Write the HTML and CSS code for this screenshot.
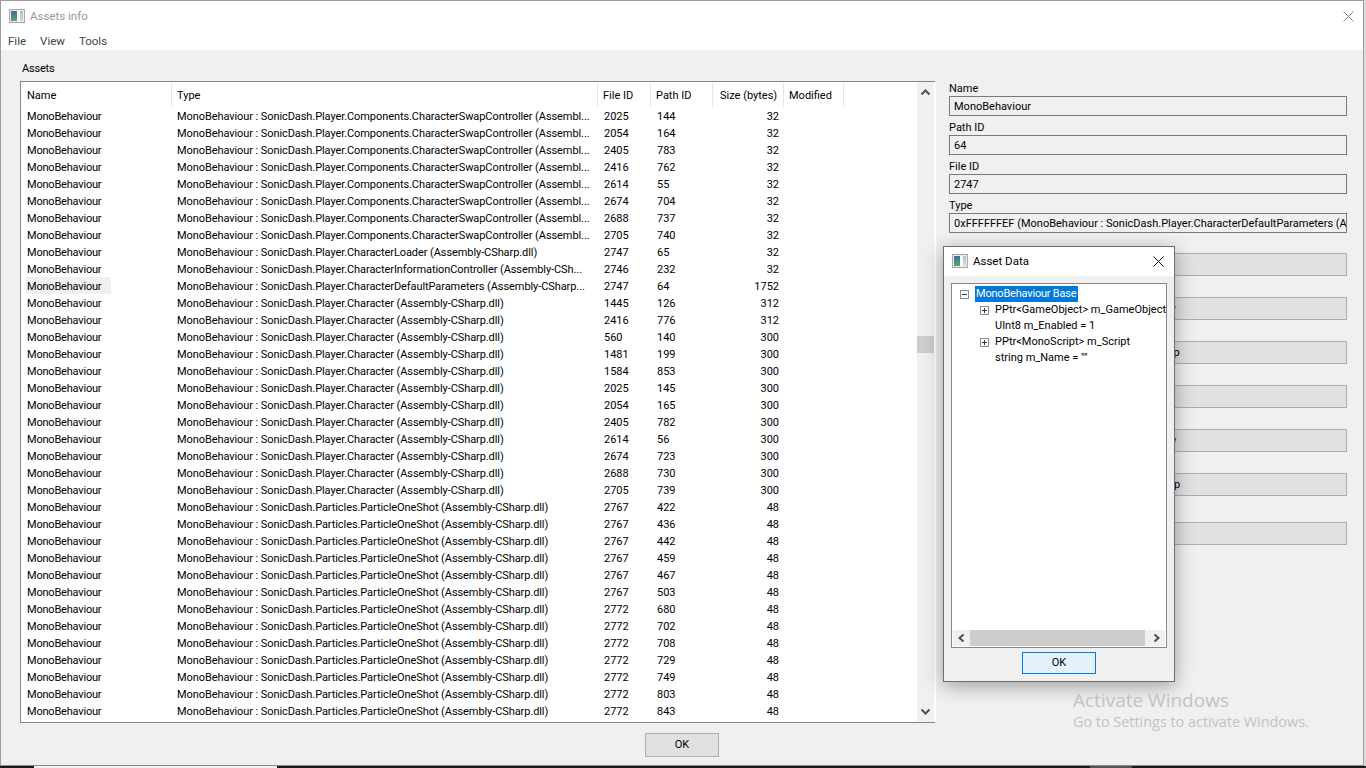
FILE: index.html
```html
<!DOCTYPE html>
<html lang="en">
<head>
<meta charset="utf-8">
<title>Assets info</title>
<link rel="stylesheet" href="styles.css">
</head>
<body>
<svg class="defs" width="0" height="0" aria-hidden="true"><defs>
  <linearGradient id="ic1" x1="0" y1="0" x2="0" y2="1"><stop offset="0" stop-color="#3f6f8f"/><stop offset="1" stop-color="#5f9f70"/></linearGradient>
  <linearGradient id="ic2" x1="0" y1="0" x2="0" y2="1"><stop offset="0" stop-color="#a9bfd2"/><stop offset="1" stop-color="#cfe3c8"/></linearGradient>
</defs></svg>
<div class="window">
  <header class="titlebar">
    <svg class="appicon" width="16" height="14" viewBox="0 0 16 14"><rect x="0.5" y="0.5" width="15" height="13" fill="#ececec" stroke="#a8a8a8"/><rect x="2" y="2" width="6" height="10" fill="url(#ic1)"/><rect x="8" y="2" width="3" height="10" fill="#fbfbfb"/><rect x="11" y="2" width="3" height="10" fill="url(#ic2)"/></svg>
    <span class="title">Assets info</span>
    <svg class="winclose" width="11" height="11" viewBox="0 0 11 11"><path d="M0.5 0.5L10.5 10.5M10.5 0.5L0.5 10.5" stroke="#8a8a8a" fill="none"/></svg>
  </header>
  <nav class="menubar"><span>File</span><span>View</span><span>Tools</span></nav>
  <main class="content">
    <div class="columns">
      <section class="assets">
        <div class="assets-label">Assets</div>
        <div class="listbox">
          <div class="tablewrap">
            <table class="grid">
              <colgroup><col class="c1"><col class="c2"><col class="c3"><col class="c4"><col class="c5"><col class="c6"><col></colgroup>
              <thead><tr><th>Name</th><th>Type</th><th>File ID</th><th>Path ID</th><th class="sz">Size (bytes)</th><th>Modified</th><th class="blank"></th></tr></thead>
              <tbody>
<tr><td>MonoBehaviour</td><td>MonoBehaviour : SonicDash.Player.Components.CharacterSwapController (Assembl...</td><td>2025</td><td>144</td><td class="n">32</td><td></td><td></td></tr>
<tr><td>MonoBehaviour</td><td>MonoBehaviour : SonicDash.Player.Components.CharacterSwapController (Assembl...</td><td>2054</td><td>164</td><td class="n">32</td><td></td><td></td></tr>
<tr><td>MonoBehaviour</td><td>MonoBehaviour : SonicDash.Player.Components.CharacterSwapController (Assembl...</td><td>2405</td><td>783</td><td class="n">32</td><td></td><td></td></tr>
<tr><td>MonoBehaviour</td><td>MonoBehaviour : SonicDash.Player.Components.CharacterSwapController (Assembl...</td><td>2416</td><td>762</td><td class="n">32</td><td></td><td></td></tr>
<tr><td>MonoBehaviour</td><td>MonoBehaviour : SonicDash.Player.Components.CharacterSwapController (Assembl...</td><td>2614</td><td>55</td><td class="n">32</td><td></td><td></td></tr>
<tr><td>MonoBehaviour</td><td>MonoBehaviour : SonicDash.Player.Components.CharacterSwapController (Assembl...</td><td>2674</td><td>704</td><td class="n">32</td><td></td><td></td></tr>
<tr><td>MonoBehaviour</td><td>MonoBehaviour : SonicDash.Player.Components.CharacterSwapController (Assembl...</td><td>2688</td><td>737</td><td class="n">32</td><td></td><td></td></tr>
<tr><td>MonoBehaviour</td><td>MonoBehaviour : SonicDash.Player.Components.CharacterSwapController (Assembl...</td><td>2705</td><td>740</td><td class="n">32</td><td></td><td></td></tr>
<tr><td>MonoBehaviour</td><td>MonoBehaviour : SonicDash.Player.CharacterLoader (Assembly-CSharp.dll)</td><td>2747</td><td>65</td><td class="n">32</td><td></td><td></td></tr>
<tr><td>MonoBehaviour</td><td>MonoBehaviour : SonicDash.Player.CharacterInformationController (Assembly-CSh...</td><td>2746</td><td>232</td><td class="n">32</td><td></td><td></td></tr>
<tr><td class="hover">MonoBehaviour</td><td>MonoBehaviour : SonicDash.Player.CharacterDefaultParameters (Assembly-CSharp...</td><td>2747</td><td>64</td><td class="n">1752</td><td></td><td></td></tr>
<tr><td>MonoBehaviour</td><td>MonoBehaviour : SonicDash.Player.Character (Assembly-CSharp.dll)</td><td>1445</td><td>126</td><td class="n">312</td><td></td><td></td></tr>
<tr><td>MonoBehaviour</td><td>MonoBehaviour : SonicDash.Player.Character (Assembly-CSharp.dll)</td><td>2416</td><td>776</td><td class="n">312</td><td></td><td></td></tr>
<tr><td>MonoBehaviour</td><td>MonoBehaviour : SonicDash.Player.Character (Assembly-CSharp.dll)</td><td>560</td><td>140</td><td class="n">300</td><td></td><td></td></tr>
<tr><td>MonoBehaviour</td><td>MonoBehaviour : SonicDash.Player.Character (Assembly-CSharp.dll)</td><td>1481</td><td>199</td><td class="n">300</td><td></td><td></td></tr>
<tr><td>MonoBehaviour</td><td>MonoBehaviour : SonicDash.Player.Character (Assembly-CSharp.dll)</td><td>1584</td><td>853</td><td class="n">300</td><td></td><td></td></tr>
<tr><td>MonoBehaviour</td><td>MonoBehaviour : SonicDash.Player.Character (Assembly-CSharp.dll)</td><td>2025</td><td>145</td><td class="n">300</td><td></td><td></td></tr>
<tr><td>MonoBehaviour</td><td>MonoBehaviour : SonicDash.Player.Character (Assembly-CSharp.dll)</td><td>2054</td><td>165</td><td class="n">300</td><td></td><td></td></tr>
<tr><td>MonoBehaviour</td><td>MonoBehaviour : SonicDash.Player.Character (Assembly-CSharp.dll)</td><td>2405</td><td>782</td><td class="n">300</td><td></td><td></td></tr>
<tr><td>MonoBehaviour</td><td>MonoBehaviour : SonicDash.Player.Character (Assembly-CSharp.dll)</td><td>2614</td><td>56</td><td class="n">300</td><td></td><td></td></tr>
<tr><td>MonoBehaviour</td><td>MonoBehaviour : SonicDash.Player.Character (Assembly-CSharp.dll)</td><td>2674</td><td>723</td><td class="n">300</td><td></td><td></td></tr>
<tr><td>MonoBehaviour</td><td>MonoBehaviour : SonicDash.Player.Character (Assembly-CSharp.dll)</td><td>2688</td><td>730</td><td class="n">300</td><td></td><td></td></tr>
<tr><td>MonoBehaviour</td><td>MonoBehaviour : SonicDash.Player.Character (Assembly-CSharp.dll)</td><td>2705</td><td>739</td><td class="n">300</td><td></td><td></td></tr>
<tr><td>MonoBehaviour</td><td>MonoBehaviour : SonicDash.Particles.ParticleOneShot (Assembly-CSharp.dll)</td><td>2767</td><td>422</td><td class="n">48</td><td></td><td></td></tr>
<tr><td>MonoBehaviour</td><td>MonoBehaviour : SonicDash.Particles.ParticleOneShot (Assembly-CSharp.dll)</td><td>2767</td><td>436</td><td class="n">48</td><td></td><td></td></tr>
<tr><td>MonoBehaviour</td><td>MonoBehaviour : SonicDash.Particles.ParticleOneShot (Assembly-CSharp.dll)</td><td>2767</td><td>442</td><td class="n">48</td><td></td><td></td></tr>
<tr><td>MonoBehaviour</td><td>MonoBehaviour : SonicDash.Particles.ParticleOneShot (Assembly-CSharp.dll)</td><td>2767</td><td>459</td><td class="n">48</td><td></td><td></td></tr>
<tr><td>MonoBehaviour</td><td>MonoBehaviour : SonicDash.Particles.ParticleOneShot (Assembly-CSharp.dll)</td><td>2767</td><td>467</td><td class="n">48</td><td></td><td></td></tr>
<tr><td>MonoBehaviour</td><td>MonoBehaviour : SonicDash.Particles.ParticleOneShot (Assembly-CSharp.dll)</td><td>2767</td><td>503</td><td class="n">48</td><td></td><td></td></tr>
<tr><td>MonoBehaviour</td><td>MonoBehaviour : SonicDash.Particles.ParticleOneShot (Assembly-CSharp.dll)</td><td>2772</td><td>680</td><td class="n">48</td><td></td><td></td></tr>
<tr><td>MonoBehaviour</td><td>MonoBehaviour : SonicDash.Particles.ParticleOneShot (Assembly-CSharp.dll)</td><td>2772</td><td>702</td><td class="n">48</td><td></td><td></td></tr>
<tr><td>MonoBehaviour</td><td>MonoBehaviour : SonicDash.Particles.ParticleOneShot (Assembly-CSharp.dll)</td><td>2772</td><td>708</td><td class="n">48</td><td></td><td></td></tr>
<tr><td>MonoBehaviour</td><td>MonoBehaviour : SonicDash.Particles.ParticleOneShot (Assembly-CSharp.dll)</td><td>2772</td><td>729</td><td class="n">48</td><td></td><td></td></tr>
<tr><td>MonoBehaviour</td><td>MonoBehaviour : SonicDash.Particles.ParticleOneShot (Assembly-CSharp.dll)</td><td>2772</td><td>749</td><td class="n">48</td><td></td><td></td></tr>
<tr><td>MonoBehaviour</td><td>MonoBehaviour : SonicDash.Particles.ParticleOneShot (Assembly-CSharp.dll)</td><td>2772</td><td>803</td><td class="n">48</td><td></td><td></td></tr>
<tr><td>MonoBehaviour</td><td>MonoBehaviour : SonicDash.Particles.ParticleOneShot (Assembly-CSharp.dll)</td><td>2772</td><td>843</td><td class="n">48</td><td></td><td></td></tr>
              </tbody>
            </table>
          </div>
          <div class="vscroll">
            <svg class="arrow" width="17" height="20" viewBox="0 0 17 20"><path d="M4.5 12.5L8.5 8.5L12.5 12.5" stroke="#505050" stroke-width="2" fill="none"/></svg>
            <div class="vtrack"><div class="vthumb"></div></div>
            <svg class="arrow" width="17" height="20" viewBox="0 0 17 20"><path d="M4.5 7.5L8.5 11.5L12.5 7.5" stroke="#505050" stroke-width="2" fill="none"/></svg>
          </div>
        </div>
      </section>
      <aside class="details">
        <label class="lbl">Name</label><div class="field">MonoBehaviour</div>
        <label class="lbl">Path ID</label><div class="field">64</div>
        <label class="lbl">File ID</label><div class="field">2747</div>
        <label class="lbl">Type</label><div class="field">0xFFFFFFEF (MonoBehaviour : SonicDash.Player.CharacterDefaultParameters (Assembly-CSharp.dll))</div>
        <div class="actions">
          <button class="btn">View Data</button>
          <button class="btn">Export Raw</button>
          <button class="btn">Export Dump</button>
          <button class="btn">Plugins</button>
          <button class="btn">Import Raw</button>
          <button class="btn">Import Dump</button>
          <button class="btn last">Remove</button>
        </div>
      </aside>
    </div>
    <footer class="footer"><button class="btn okmain">OK</button></footer>
  </main>
</div>
<div class="taskbar"><span class="task1"></span><span class="task2"></span></div>

<div class="dialog">
  <div class="dlg-title">
    <svg class="appicon" width="16" height="14" viewBox="0 0 16 14"><rect x="0.5" y="0.5" width="15" height="13" fill="#ececec" stroke="#a8a8a8"/><rect x="2" y="2" width="6" height="10" fill="url(#ic1)"/><rect x="8" y="2" width="3" height="10" fill="#fbfbfb"/><rect x="11" y="2" width="3" height="10" fill="url(#ic2)"/></svg>
    <span class="dlg-name">Asset Data</span>
    <svg class="dlg-close" width="11" height="11" viewBox="0 0 11 11"><path d="M0.5 0.5L10.5 10.5M10.5 0.5L0.5 10.5" stroke="#111" fill="none"/></svg>
  </div>
  <div class="dlg-body">
    <div class="tree">
      <div class="tree-inner">
        <div class="node root">
          <svg class="exp" width="9" height="9" viewBox="0 0 9 9"><rect x="0.5" y="0.5" width="8" height="8" fill="#fff" stroke="#8c8c8c"/><path d="M2 4.5H7" stroke="#333"/></svg>
          <span class="sel">MonoBehaviour Base</span>
        </div>
        <div class="node child">
          <svg class="exp" width="9" height="9" viewBox="0 0 9 9"><rect x="0.5" y="0.5" width="8" height="8" fill="#fff" stroke="#8c8c8c"/><path d="M2 4.5H7M4.5 2V7" stroke="#333"/></svg>
          <span class="nodetext">PPtr&lt;GameObject&gt; m_GameObject</span>
        </div>
        <div class="node child leaf"><span class="nodetext">UInt8 m_Enabled = 1</span></div>
        <div class="node child">
          <svg class="exp" width="9" height="9" viewBox="0 0 9 9"><rect x="0.5" y="0.5" width="8" height="8" fill="#fff" stroke="#8c8c8c"/><path d="M2 4.5H7M4.5 2V7" stroke="#333"/></svg>
          <span class="nodetext">PPtr&lt;MonoScript&gt; m_Script</span>
        </div>
        <div class="node child leaf"><span class="nodetext">string m_Name = ""</span></div>
      </div>
      <div class="hscroll">
        <svg width="17" height="16" viewBox="0 0 17 16"><path d="M10.5 4.5L6.5 8L10.5 11.5" stroke="#505050" stroke-width="2" fill="none"/></svg>
        <div class="hthumb"></div>
        <svg width="17" height="16" viewBox="0 0 17 16"><path d="M6.5 4.5L10.5 8L6.5 11.5" stroke="#505050" stroke-width="2" fill="none"/></svg>
      </div>
    </div>
    <div class="dlg-foot"><button class="okdlg">OK</button></div>
  </div>
</div>

<div class="activate">
  <div class="act1">Activate Windows</div>
  <div class="act2">Go to Settings to activate Windows.</div>
</div>
</body>
</html>
```
FILE: styles.css
```css
* { box-sizing: border-box; }
html, body { margin: 0; padding: 0; }
body {
  width: 1366px;
  height: 768px;
  overflow: hidden;
  position: relative;
  background: #dcdcdc;
  font-family: "Roboto", "Liberation Sans", sans-serif;
  font-size: 11px;
  line-height: 16px;
  color: #000;
}
.defs { position: absolute; }
.window {
  width: 1364px;
  height: 766px;
  border: 1px solid #9c9c9c;
  border-bottom-color: #8a8a8a;
  display: flex;
  flex-direction: column;
  background: #f0f0f0;
}
.titlebar {
  height: 31px;
  background: #fff;
  display: flex;
  align-items: center;
  padding: 0 9px 1px 8px;
}
.title { margin-left: 5px; color: #999; font-size: 11.5px; }
.winclose { margin-left: auto; }
.menubar {
  height: 18px;
  background: #fff;
  display: flex;
  gap: 14px;
  padding: 1px 0 0 7px;
  color: #444;
  font-size: 11.5px;
}
.content { flex: 1; display: flex; flex-direction: column; min-height: 0; }
.columns { display: flex; height: 674px; }
.assets { width: 934px; padding: 10px 0 0 19px; flex: none; }
.assets-label { height: 21px; padding: 1px 0 0 2px; letter-spacing: -0.2px; }
.listbox {
  width: 915px;
  height: 642px;
  border: 1px solid #828790;
  background: #fff;
  display: flex;
}
.tablewrap { width: 896px; overflow: hidden; flex: none; }
.grid { border-collapse: collapse; table-layout: fixed; width: 896px; }
.c1 { width: 151px; } .c2 { width: 426px; } .c3 { width: 53px; }
.c4 { width: 62px; } .c5 { width: 71px; } .c6 { width: 60px; }
.grid th {
  height: 25px;
  padding: 1px 0 0 5px;
  line-height: 15px;
  font-weight: 400;
  text-align: left;
  white-space: nowrap;
  overflow: hidden;
  background: linear-gradient(#e5e5e5, #e5e5e5) right 0 top 1px / 1px 24px no-repeat;
}
.grid th:first-child { padding-left: 6px; }
.grid th.blank { background: none; }
.grid th.sz { padding-left: 7px; }
.grid td {
  height: 17px;
  padding: 2px 0 0 6px;
  white-space: nowrap;
  overflow: hidden;
  line-height: 15px;
}
.grid td:first-child { letter-spacing: -0.2px; }
.grid td:nth-child(2) { padding-left: 5px; letter-spacing: -0.08px; }
.grid td.n { text-align: right; padding: 2px 5px 0 0; }
.grid td.hover { background: linear-gradient(#f0f0f0, #f0f0f0) 5px 0 / 85px 17px no-repeat; }
.vscroll {
  flex: 1;
  display: flex;
  flex-direction: column;
  background: #f0f0f0;
  border-right: 2px solid #fff;
}
.arrow { flex: none; }
.vtrack { flex: 1; padding-top: 234px; }
.vthumb { height: 17px; background: #cdcdcd; }
.details {
  flex: 1;
  min-width: 0;
  padding: 31px 16px 0 14px;
  display: flex;
  flex-direction: column;
}
.lbl { display: block; height: 15px; line-height: 15px; }
.field {
  height: 20px;
  margin-bottom: 4px;
  border: 1px solid #7a7a7a;
  background: #f0f0f0;
  padding: 1px 4px 0;
  line-height: 18px;
  white-space: nowrap;
  overflow: hidden;
}
.actions { display: flex; flex-direction: column; gap: 21px; margin-top: 16px; }
.btn {
  height: 23px;
  background: #e1e1e1;
  border: 1px solid #adadad;
  font: inherit;
  color: #000;
  padding: 0;
}
.btn.last { margin-top: 5px; }
.footer { display: flex; justify-content: center; padding-top: 9px; }
.okmain { width: 74px; height: 24px; }
.taskbar {
  height: 2px;
  background: #1a1a1a;
  position: absolute;
  left: 0; right: 0; bottom: 0;
  display: flex;
}
.task1 { margin-left: 34px; width: 243px; background: #f2f2f2; }
.task2 { margin-left: 813px; width: 42px; background: #555; }

.dialog {
  position: absolute;
  left: 943px;
  top: 246px;
  width: 232px;
  height: 436px;
  border: 1px solid #6e6e6e;
  background: #f0f0f0;
  box-shadow: 0 4px 18px rgba(0,0,0,.35);
  display: flex;
  flex-direction: column;
}
.dlg-title {
  height: 29px;
  background: #fff;
  display: flex;
  align-items: center;
  padding: 0 10px 2px 8px;
  flex: none;
}
.dlg-name { margin-left: 5px; font-size: 11.5px; }
.dlg-close { margin-left: auto; margin-top: 1px; }
.dlg-body { flex: 1; padding: 7px 7px 0; display: flex; flex-direction: column; }
.tree {
  height: 365px;
  border: 1px solid #828790;
  background: #fff;
  display: flex;
  flex-direction: column;
  flex: none;
}
.tree-inner { flex: 1; overflow: hidden; padding-top: 2px; }
.node { height: 16px; display: flex; align-items: center; white-space: nowrap; }
.root { padding-left: 8px; }
.child { padding-left: 28px; }
.leaf { padding-left: 43px; }
.exp { flex: none; }
.sel {
  margin-left: 6px;
  background: #0078d7;
  color: #fff;
  padding: 0 2px 0 1px;
  height: 16px;
  letter-spacing: -0.2px;
}
.nodetext { margin-left: 6px; }
.leaf .nodetext { margin-left: 0; }
.hscroll {
  height: 16px;
  margin: 0 1px 1px;
  display: flex;
  background: #f0f0f0;
  flex: none;
}
.hthumb { width: 175px; margin-left: 0; background: #cdcdcd; }
.hscroll svg:last-child { margin-left: auto; }
.dlg-foot { display: flex; justify-content: center; padding-top: 4px; }
.okdlg {
  width: 74px;
  height: 22px;
  border: 1px solid #0078d7;
  background: #e5f1fb;
  font: inherit;
  padding: 0;
  color: #000;
}
.activate {
  position: absolute;
  left: 1073px;
  top: 688px;
  color: #c2c2c2;
  pointer-events: none;
  font-family: "Open Sans", "Noto Sans", sans-serif;
}
.act1 { font-size: 19px; line-height: 24px; }
.act2 { font-size: 14.4px; line-height: 20px; }
```
